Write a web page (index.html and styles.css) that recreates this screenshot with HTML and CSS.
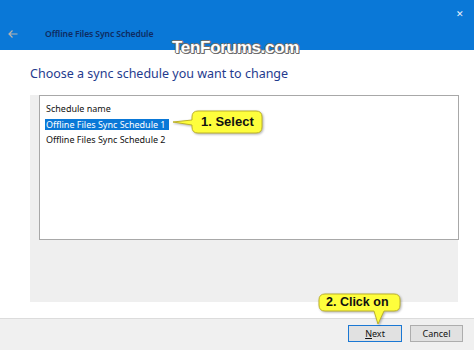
FILE: index.html
```html
<!DOCTYPE html>
<html lang="en">
<head>
    <meta charset="UTF-8">
    <title>Offline Files Sync Schedule</title>
    <link rel="stylesheet" href="styles.css">
</head>
<body>
    <div class="window">
        <header class="title-bar">
            <div class="title-top">
                <span class="close-btn">&#x2715;</span>
            </div>
            <div class="title-row">
                <svg class="back-arrow" width="10" height="8" viewBox="0 0 10 8">
                    <path d="M4.5 0.5 L1 4 L4.5 7.5 M1 4 H9.5" fill="none" stroke="#b9b3ad" stroke-width="1.2"/>
                </svg>
                <span class="title-text">Offline Files Sync Schedule</span>
            </div>
        </header>

        <main class="content">
            <h1 class="heading">Choose a sync schedule you want to change</h1>
            <div class="panel">
                <div class="listbox">
                    <div class="list-header">Schedule name</div>
                    <div class="list-item selected">Offline Files Sync Schedule 1</div>
                    <div class="list-item">Offline Files Sync Schedule 2</div>
                </div>
            </div>
        </main>

        <footer class="footer">
            <button class="btn btn-default"><u>N</u>ext</button>
            <button class="btn">Cancel</button>
        </footer>

        <div class="watermark">TenForums.com</div>

        <div class="callout callout-select">
            <svg width="96" height="28" viewBox="0 0 96 28">
                <path d="M28 3 H86 Q92 3 92 9 V19 Q92 25 86 25 H28 Q22 25 22 19 V17 L3 14 L22 12 V9 Q22 3 28 3 Z" fill="#fefe3c" stroke="#bdb22a" stroke-width="1"/>
            </svg>
            <span class="callout-text">1. Select</span>
        </div>

        <div class="callout callout-next">
            <svg width="88" height="36" viewBox="0 0 88 36">
                <path d="M9 3 H78 Q84 3 84 9 V14 Q84 20 78 20 H68 L62 33 L58 20 H9 Q3 20 3 14 V9 Q3 3 9 3 Z" fill="#fefe3c" stroke="#bdb22a" stroke-width="1"/>
            </svg>
            <span class="callout-text">2. Click on</span>
        </div>
    </div>
</body>
</html>
```

FILE: styles.css
```css
* { margin: 0; padding: 0; box-sizing: border-box; }
body { font-family: 'Noto Sans', 'Open Sans', sans-serif; background-color: #fff; color: #000; overflow: hidden; }
.window { position: relative; width: 474px; height: 350px; display: flex; flex-direction: column; background-color: #fff; }

.title-bar { height: 50px; background-color: #0a78d7; display: flex; flex-direction: column; }
.title-top { height: 26px; display: flex; justify-content: flex-end; align-items: center; padding-right: 10px; }
.close-btn { color: #eaf3fc; font-size: 9px; line-height: 1; }
.title-row { display: flex; align-items: center; height: 16px; padding-left: 8px; }
.back-arrow { margin-right: 27px; }
.title-text { font-size: 8.6px; font-weight: 600; color: #0e2c62; letter-spacing: -0.1px; }

.content { display: flex; flex-direction: column; padding-left: 30px; }
.heading { font-size: 12.5px; font-weight: 400; color: #1f3b8e; height: 45px; line-height: 14px; padding-top: 17px; }
.panel { width: 428px; height: 207px; background-color: #efefef; padding-left: 9px; }
.listbox { width: 420px; height: 145px; background-color: #fff; border: 1px solid #a8a8a8; padding: 7px 0 0 5px; font-size: 9px; line-height: 11px; }
.list-header { padding-left: 1px; margin-bottom: 5px; color: #111; }
.list-item { padding: 0 2px 0 1px; color: #111; width: max-content; height: 11px; margin-bottom: 3.5px; }
.list-item.selected { background-color: #0a78d7; color: #fff; padding-right: 3px; }

.footer { margin-top: 16px; height: 32px; background-color: #f0f0f0; border-top: 1px solid #dcdcdc; display: flex; justify-content: flex-end; align-items: flex-start; gap: 8px; padding: 6px 11px 0 0; }
.btn { width: 53px; height: 17px; background-color: #e1e1e1; border: 1px solid #adadad; font-family: inherit; font-size: 9px; color: #111; line-height: 14px; }
.btn-default { width: 54px; border-color: #1a78d4; }

.watermark { position: absolute; left: 172px; top: 38px; font-family: 'Liberation Sans', Arial, sans-serif; font-weight: 700; font-size: 17px; color: #fff; letter-spacing: -0.3px; text-shadow: 1px 0 0 #6e6e6e, -1px 0 0 #6e6e6e, 0 1px 0 #6e6e6e, 0 -1px 0 #6e6e6e, 1px 1px 0 #5e5e5e; }

.callout { position: absolute; }
.callout svg { position: absolute; left: 0; top: 0; filter: drop-shadow(1px 1px 1px rgba(0,0,0,0.3)); }
.callout-text { position: absolute; font-family: 'Liberation Sans', Arial, sans-serif; font-weight: 700; font-size: 13px; color: #111; white-space: nowrap; }
.callout-select { left: 170px; top: 108px; width: 96px; height: 28px; }
.callout-select .callout-text { left: 31px; top: 6px; }
.callout-next { left: 316px; top: 291px; width: 88px; height: 36px; }
.callout-next .callout-text { left: 10px; top: 4px; font-size: 12.5px; }
```
